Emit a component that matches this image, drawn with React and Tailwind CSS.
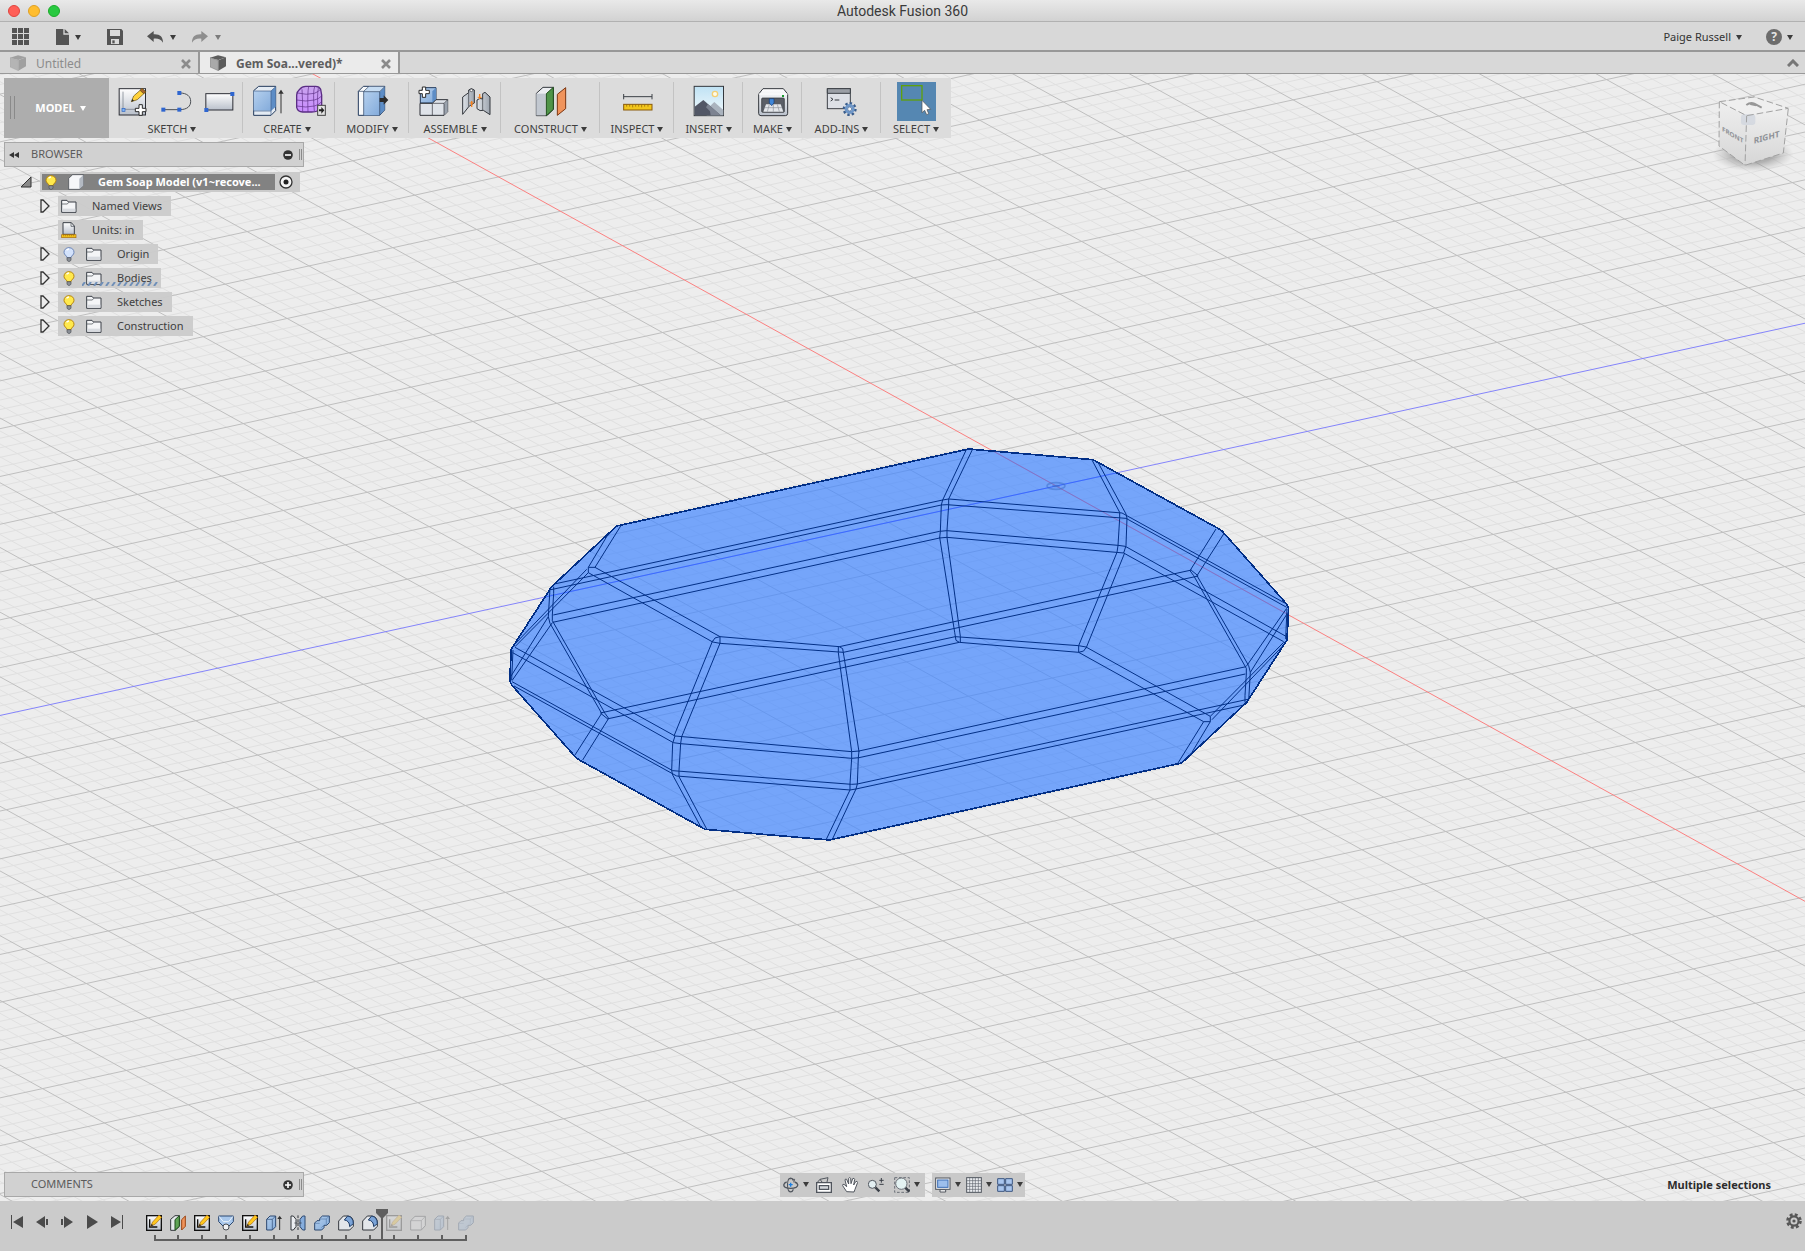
import React from "react";

/* ---------- viewport geometry ---------- */

const ORIGIN = { x: 1056, y: 412 };
const SLOPE_A = -0.2173;
const SLOPE_B = 0.5545;
const REACH = 2600;

const gridPath = (slope, step, from, to, keep) => {
  let d = "";
  for (let k = from; k <= to; k++) {
    if (!keep(k)) continue;
    const y = ORIGIN.y - slope * ORIGIN.x + k * step;
    d += `M0 ${y.toFixed(2)}L${REACH} ${(y + slope * REACH).toFixed(2)}`;
  }
  return d;
};

const isMajor = (k) => k % 5 === 0 && k !== 0;
const isMinor = (k) => k % 5 !== 0;

const minorGrid =
  gridPath(SLOPE_A, 9.56, -70, 160, isMinor) + gridPath(SLOPE_B, 12.94, -110, 110, isMinor);
const majorGrid =
  gridPath(SLOPE_A, 9.56, -70, 160, isMajor) + gridPath(SLOPE_B, 12.94, -110, 110, isMajor);

const GEM_OUTLINE =
  "M380 288L185 470L64 657L59 752L66 766L258 983L272 992L645 1198L1018 1230L2075 999L2270 817L2391 630L2396 535L2389 521L2197 304L2184 295L1809 89L1436 57Z";

// one half of the bevelled edges, the other half is the same turned by 180deg
const GEM_EDGES =
  "M75 652L555 918L1085 965L1107 963L2268 710M68 668L550 938L572 941L1085 985L1107 983L2266 732" +
  "M66 755L548 1022L1085 1063L1102 1062L2273 808M72 768L560 1038L1080 1080L1098 1077L2263 825" +
  "M555 918L548 940L545 1022L548 1035L632 1190M575 920L572 940L567 1022L567 1040L650 1197" +
  "M1085 965L1085 985L1080 1062L1080 1080L1008 1230M1107 963L1105 983L1102 1062L1098 1077L1027 1228" +
  "M668 632L552 918M690 640L575 920M315 412L690 620L1048 650L2105 420M295 428L668 636L690 640L1060 667L2125 438" +
  "M690 620L690 640M690 620L675 624L668 634M1045 650L1045 668L1085 965M1048 650L1058 656L1062 680L1107 965" +
  "M378 290L350 320L295 412L315 412L392 288M295 412L295 428L75 650M290 418L72 645" +
  "M191 470L191 490L187 555L187 572L345 850L356 865L278 990M180 475L175 560L180 580L335 850L255 975M332 850L352 866" +
  "M175 560L62 740M187 578L66 752M69 660L65 750";

const Gem = () => (
  <g transform="translate(490 356) scale(0.33333)" strokeLinejoin="round">
    <path d={GEM_OUTLINE} fill="#4286ff" fillOpacity="0.7" />
    <clipPath id="gem">
      <path d={GEM_OUTLINE} />
    </clipPath>
    <g clipPath="url(#gem)" fill="none" strokeWidth="3">
      <path d="M-300 602L2500 -6" stroke="#2b55ff" strokeOpacity="0.6" />
      <path d="M900 -275L2700 723" stroke="#a04a9a" strokeOpacity="0.35" />
    </g>
    <ellipse cx="1698" cy="168" rx="27" ry="10" fill="none" stroke="#3a6cc8" strokeOpacity="0.5" strokeWidth="5" />
    <ellipse cx="1698" cy="168" rx="12" ry="4" fill="#3a6cc8" fillOpacity="0.6" />
    <g fill="none" stroke="#022f86" strokeWidth="3" shapeRendering="crispEdges">
      <path d={GEM_EDGES} />
      <path d={GEM_EDGES} transform="translate(2456 1287) rotate(180)" />
      <path d={GEM_OUTLINE} strokeWidth="5" />
    </g>
  </g>
);

const Scene = () => (
  <svg className="absolute inset-0 h-full w-full" aria-hidden="true">
    <g fill="none" strokeWidth="1">
      <path d={minorGrid} stroke="#e0e0e0" />
      <path d={majorGrid} stroke="#bfbfbf" />
      <path d={gridPath(SLOPE_A, 9.56, 0, 0, () => true)} stroke="#8484fb" />
      <path d={gridPath(SLOPE_B, 12.94, 0, 0, () => true)} stroke="#fb8080" />
    </g>
    <Gem />
  </svg>
);

const ViewCube = () => (
  <svg className="absolute right-2 top-[16px] h-[84px] w-[84px]" viewBox="340 270 252 252" aria-label="View cube">
    <defs>
      <radialGradient id="cubeShadow">
        <stop offset="0.5" stopColor="#888" stopOpacity="0.6" />
        <stop offset="1" stopColor="#aaa" stopOpacity="0" />
      </radialGradient>
      <linearGradient id="cubeFace" x1="0" y1="0" x2="0" y2="1">
        <stop offset="0" stopColor="#efefef" />
        <stop offset="1" stopColor="#d6d6d6" />
      </linearGradient>
    </defs>
    <ellipse cx="460" cy="463" rx="122" ry="52" fill="url(#cubeShadow)" />
    <path d="M359 305L464 291L566 325L441 347Z" fill="#efefef" />
    <path d="M359 305L441 347L436 496L358 438Z" fill="url(#cubeFace)" />
    <path d="M441 347L566 325L551 459L436 496Z" fill="url(#cubeFace)" />
    <rect x="424" y="343" width="43" height="32" rx="9" fill="#cdd3dd" fillOpacity="0.7" />
    <path
      d="M359 305L464 291L566 325L441 347ZM441 347L436 496M359 305L358 438L436 496L551 459L566 325"
      fill="none"
      stroke="#a2a2a2"
      strokeWidth="3"
      strokeDasharray="20 9"
    />
    <path d="M440 315Q452 306 464 311L486 323M452 312L470 316" fill="none" stroke="#979797" strokeWidth="6" />
    <g fill="#8f9297" fontFamily="Noto Sans, sans-serif" fontWeight="700">
      <text fontSize="19" transform="translate(367 393) skewY(30)">FRONT</text>
      <text fontSize="25" transform="translate(462 431) skewY(-15)">RIGHT</text>
    </g>
  </svg>
);

/* ---------- shared bits ---------- */

const Caret = ({ className = "text-[#3c3c3c]" }) => (
  <svg className={`h-[5px] w-[6px] shrink-0 ${className}`} viewBox="0 0 6 5" aria-hidden="true">
    <path d="M0 0H6L3 5Z" fill="currentColor" />
  </svg>
);

const Icon = ({ box, className = "h-8 w-8", children }) => (
  <svg className={`shrink-0 ${className}`} viewBox={box} fill="none" aria-hidden="true">
    {children}
  </svg>
);

const Defs = () => (
  <svg className="absolute h-0 w-0" aria-hidden="true">
    <defs>
      <linearGradient id="paper" x1="0" y1="0" x2="0" y2="1">
        <stop offset="0" stopColor="#ffffff" />
        <stop offset="1" stopColor="#b9c0cb" />
      </linearGradient>
      <linearGradient id="blue" x1="0" y1="0" x2="1" y2="1">
        <stop offset="0" stopColor="#b5d0ee" />
        <stop offset="1" stopColor="#83abdb" />
      </linearGradient>
      <linearGradient id="sky" x1="0" y1="0" x2="0" y2="1">
        <stop offset="0" stopColor="#bfe2f4" />
        <stop offset="1" stopColor="#f3fafd" />
      </linearGradient>
      <linearGradient id="purple" x1="0" y1="0" x2="0" y2="1">
        <stop offset="0" stopColor="#c9a3ee" />
        <stop offset="1" stopColor="#c98dff" />
      </linearGradient>
      <linearGradient id="steel" x1="0" y1="0" x2="1" y2="0">
        <stop offset="0" stopColor="#dfe3e8" />
        <stop offset="1" stopColor="#9ca4ae" />
      </linearGradient>
    </defs>
  </svg>
);

/* ---------- ribbon icons ---------- */

const SketchIcon = () => (
  <Icon box="355 255 96 96">
    <rect x="358.500" y="266" width="79" height="79" fill="url(#paper)" stroke="#2d2f36" strokeWidth="3" />
    <path d="M370 275V328H412" stroke="#6b7280" strokeWidth="2" />
    <rect x="367" y="325" width="9" height="9" fill="#7fb4f5" stroke="#2b62c0" strokeWidth="2" />
    <path d="M395 305L402 288L427 266L438 276L413 299Z" fill="#ffd23c" stroke="#5f4a10" strokeWidth="2" />
    <path d="M421 271L427 265L438 275L432 281Z" fill="#a9672f" stroke="#5f4a10" strokeWidth="2" />
    <path d="M395 305L398 297L403 302Z" fill="#222" />
    <path d="M418 314H428V325H439V335H428V346H418V335H407V325H418Z" fill="#fff" stroke="#2b2b2b" strokeWidth="3" />
  </Icon>
);

const SplineIcon = () => (
  <Icon box="482 255 96 96">
    <path d="M489 329H537C562 329 571 318 571 304C571 289 560 279 538 279" stroke="#4b4f55" strokeWidth="3" />
    <rect x="483" y="323" width="12" height="12" fill="#2f66d0" />
    <rect x="531" y="323" width="12" height="12" fill="#2f66d0" />
    <rect x="531" y="273" width="12" height="12" fill="#2f66d0" />
  </Icon>
);

const RectIcon = () => (
  <Icon box="611 255 96 96">
    <rect x="616.500" y="281" width="81" height="49" fill="url(#paper)" stroke="#2d2f36" strokeWidth="3" />
    <rect x="612" y="324" width="12" height="12" fill="#2f66d0" />
    <rect x="690" y="276" width="12" height="12" fill="#2f66d0" />
  </Icon>
);

const ExtrudeIcon = () => (
  <Icon box="755 255 96 96">
    <path d="M760 272L775 259H826L826 332L812 346H760Z" fill="#e4ebf3" stroke="#233a5c" strokeWidth="3" />
    <path d="M760 273H812V332H760Z" fill="url(#blue)" />
    <path d="M812 273L826 260V320L812 333Z" fill="#5d8dc6" />
    <path d="M760 273H812L826 260M812 273V346M760 333H812" stroke="#3c5c86" strokeWidth="2" />
    <path d="M842 340V272" stroke="#333" strokeWidth="3" />
    <path d="M834 281L842 269L850 281Z" fill="#333" />
  </Icon>
);

const FormIcon = () => (
  <Icon box="885 255 96 96">
    <path
      d="M890 285Q890 276 899 268Q906 259 917 259H947Q958 259 962 268L965 285V318Q965 330 952 333Q946 336 935 336H908Q893 335 890 322Z"
      fill="url(#purple)"
      stroke="#5a2d84"
      strokeWidth="4"
    />
    <path
      d="M890 300Q918 306 943 300Q955 298 965 288M890 318Q918 324 943 318Q957 315 965 305M893 279Q920 286 943 280Q957 275 962 267M906 268Q908 300 908 335M926 260Q922 275 924 336M944 260Q938 275 943 334M955 264Q951 285 954 330"
      stroke="#5a2d84"
      strokeWidth="2"
    />
    <rect x="953" y="316" width="23" height="30" fill="#e2e2e2" stroke="#444" strokeWidth="3" />
    <path d="M957 328H964V321L973 331L964 341V334H957Z" fill="#222" />
  </Icon>
);

const ModifyIcon = () => (
  <Icon box="1068 255 96 96">
    <path d="M1072 274L1087 259H1151V330L1136 346H1072Z" fill="#f6f8fa" stroke="#233a5c" strokeWidth="3" />
    <path d="M1088 275H1136V346H1088Z" fill="url(#blue)" />
    <path d="M1136 275L1151 260V330L1136 345Z" fill="#5d8dc6" />
    <path d="M1088 275L1103 260H1151L1136 275Z" fill="#c6dcf2" />
    <path d="M1072 274H1088L1103 260M1088 274V346M1088 275H1136L1151 260M1136 275V346" stroke="#233a5c" strokeWidth="2" />
    <path d="M1136 294H1148V286L1162 300L1148 314V306H1136Z" fill="#2c2c2c" />
  </Icon>
);

const ComponentIcon = () => (
  <Icon box="1253 255 96 96">
    <path d="M1260 274L1272 263H1307V300L1296 309H1260Z" fill="url(#blue)" stroke="#233a5c" strokeWidth="3" />
    <path d="M1296 274L1307 263V300L1296 310Z" fill="#5d8dc6" />
    <path d="M1259 310H1296L1307 299H1342V335L1331 346H1259Z" fill="#dfe3e9" stroke="#2d2f36" strokeWidth="3" />
    <path d="M1331 311L1342 300V335L1331 346Z" fill="#9aa2ad" />
    <path d="M1296 310V346M1296 310H1331L1342 299M1331 310V346" stroke="#2d2f36" strokeWidth="2" />
    <path d="M1266 261H1276V271H1287V281H1276V292H1266V281H1256V271H1266Z" fill="#fff" stroke="#2b2b2b" strokeWidth="3" />
  </Icon>
);

const JointIcon = () => (
  <Icon box="1385 255 96 96">
    <path d="M1390 291L1408 278V270Q1416 262 1425 270V309L1410 318L1390 343Z" fill="url(#steel)" stroke="#33373d" strokeWidth="3" />
    <path d="M1408 278V318" stroke="#33373d" strokeWidth="2" />
    <circle cx="1416" cy="271" r="4" fill="#fff" stroke="#33373d" strokeWidth="2" />
    <path d="M1433 300Q1442 292 1450 297V281L1457 277L1472 291V344L1452 331Q1442 335 1433 326Z" fill="url(#steel)" stroke="#33373d" strokeWidth="3" />
    <path d="M1450 297V330" stroke="#33373d" strokeWidth="2" />
    <path d="M1417 303V321M1441 282V298" stroke="#f58220" strokeWidth="4" />
    <path d="M1411 309H1423M1435 292H1447" stroke="#f58220" strokeWidth="3" />
  </Icon>
);

const ConstructIcon = () => (
  <Icon box="225 45 96 96">
    <path d="M229 70L249 52H280V118L261 137H229Z" fill="#eceef1" stroke="#33373d" strokeWidth="3" />
    <path d="M229 71H257V136H229Z" fill="#c2c8d0" />
    <path d="M259 71L280 52V118L259 137Z" fill="#4f9448" stroke="#1f4d1c" strokeWidth="3" />
    <path d="M292 73L317 53V116L292 136Z" fill="#f0945c" stroke="#7c3510" strokeWidth="3" />
  </Icon>
);

const InspectIcon = () => (
  <Icon box="482 45 96 96">
    <path d="M487 80H572M487 72V88M572 72V88" stroke="#3c4046" strokeWidth="3" />
    <rect x="487" y="103" width="85" height="17" fill="#f2c61c" stroke="#8a5a0b" strokeWidth="3" />
    <path d="M496 104V110M505 104V110M514 104V112M523 104V110M532 104V110M541 104V112M550 104V110M560 104V110" stroke="#8a5a0b" strokeWidth="2" />
  </Icon>
);

const InsertIcon = () => (
  <Icon box="699 45 96 96">
    <rect x="702.500" y="49" width="88" height="88" fill="url(#sky)" stroke="#33373d" strokeWidth="3" />
    <path d="M740 118L763 96L790 120V136H740Z" fill="#aab3be" />
    <path d="M704 110L730 90L782 136H704Z" fill="#525766" />
    <path d="M730 90L744 102L738 112L750 124L752 136H782Z" fill="#7d8391" />
    <circle cx="765" cy="72" r="8" fill="#fffbe6" stroke="#f3cf74" strokeWidth="4" />
  </Icon>
);

const MakeIcon = () => (
  <Icon box="891 45 96 96">
    <path d="M896 72L909 56H970L983 72V130Q983 137 976 137H903Q896 137 896 130Z" fill="url(#paper)" stroke="#33373d" strokeWidth="3" />
    <path d="M896 72H983" stroke="#fff" strokeWidth="3" />
    <rect x="905" y="84" width="68" height="43" rx="3" fill="#5a5e66" stroke="#2b2d31" strokeWidth="2" />
    <path d="M918 103H962L970 125H910Z" fill="#e3e6ea" />
    <path d="M914 113H966M928 103L922 125M952 103L958 125M940 103V125" stroke="#8c9199" strokeWidth="2" />
    <path d="M928 86H942V99L935 107L928 99Z" fill="#3f86d8" stroke="#163d74" strokeWidth="2" />
    <rect x="966" y="75" width="6" height="6" fill="#189a2c" />
  </Icon>
);

const AddinsIcon = () => (
  <Icon box="1098 45 96 96">
    <rect x="1102" y="56" width="69" height="60" fill="#dde0e6" stroke="#3c4046" strokeWidth="3" />
    <path d="M1102 56H1171V70H1102Z" fill="#9b9fa6" stroke="#3c4046" strokeWidth="3" />
    <path d="M1112 83L1119 88L1112 93M1124 90H1138" stroke="#33373d" strokeWidth="3" />
    <circle cx="1169" cy="117" r="17" stroke="#3a5d8c" strokeWidth="8" strokeDasharray="7 6" />
    <circle cx="1169" cy="117" r="11" fill="#dbe7f5" stroke="#6f97c8" strokeWidth="8" />
    <circle cx="1169" cy="117" r="6" fill="#f3f7fb" stroke="#3a5d8c" strokeWidth="2" />
  </Icon>
);

const SelectIcon = () => (
  <Icon box="1310 38 117 117" className="h-[39px] w-[39px] bg-[#5587b2]">
    <rect x="1324" y="49" width="61" height="43" stroke="#5fa00c" strokeWidth="4" />
    <path d="M1385 93V130L1393 123L1399 136L1405 133L1400 121L1411 120Z" fill="#fff" stroke="#4a4a4a" strokeWidth="2" />
  </Icon>
);

const ribbon = [
  { label: "SKETCH", width: "w-[134px]", pad: "pr-2", icons: [SketchIcon, SplineIcon, RectIcon] },
  { label: "CREATE", width: "w-[92px]", pad: "pr-1", icons: [ExtrudeIcon, FormIcon] },
  { label: "MODIFY", width: "w-[74px]", icons: [ModifyIcon] },
  { label: "ASSEMBLE", width: "w-[92px]", icons: [ComponentIcon, JointIcon] },
  { label: "CONSTRUCT", width: "w-[99px]", icons: [ConstructIcon] },
  { label: "INSPECT", width: "w-[74px]", icons: [InspectIcon] },
  { label: "INSERT", width: "w-[69px]", icons: [InsertIcon] },
  { label: "MAKE", width: "w-[59px]", icons: [MakeIcon] },
  { label: "ADD-INS", width: "w-[79px]", icons: [AddinsIcon] },
  { label: "SELECT", width: "w-[70px]", icons: [SelectIcon] },
];

const Ribbon = () => (
  <div className="flex h-[60px] w-max bg-[#dcdcdc]">
    <button className="relative flex w-[105px] items-center justify-center gap-[5px] bg-[#adadad] pl-2 pt-px text-[11px] font-bold text-white">
      <span className="absolute left-[6px] top-[18px] h-[23px] w-[5px] border-x border-[#8a8a8a]" />
      MODEL
      <Caret className="text-white" />
    </button>
    {ribbon.map(({ label, width, pad = "", icons }, i) => (
      <div key={label} className={`relative flex flex-col pt-[3px] ${width}`}>
        <div className="mb-px flex h-10 items-center justify-center gap-[11px] pl-px">
          {icons.map((Glyph, n) => (
            <button key={n} aria-label={`${label} ${n + 1}`}>
              <Glyph />
            </button>
          ))}
        </div>
        <button
          className={`flex h-[14px] items-center justify-center gap-[3px] text-[11px] leading-[14px] text-[#3f3f3f] ${pad}`}
        >
          {label}
          <Caret />
        </button>
        {i < ribbon.length - 1 && <span className="absolute right-0 top-1 h-[51px] w-px bg-[#c3c3c3]" />}
      </div>
    ))}
  </div>
);

/* ---------- title, quick access, tabs ---------- */

const TitleBar = () => (
  <header className="relative flex h-[22px] items-center justify-center border-b border-[#b1b1b1] bg-gradient-to-b from-[#e9e9e9] to-[#d2d2d2]">
    <div className="absolute left-2 flex gap-2">
      <button aria-label="Close" className="h-3 w-3 rounded-full border border-[#e0443e] bg-[#ff5f57]" />
      <button aria-label="Minimize" className="h-3 w-3 rounded-full border border-[#dfa023] bg-[#ffbd2e]" />
      <button aria-label="Zoom" className="h-3 w-3 rounded-full border border-[#1aab29] bg-[#28c940]" />
    </div>
    <h1 className="font-[Roboto,sans-serif] text-[14px] leading-4 text-[#3a3a3a]">Autodesk Fusion 360</h1>
  </header>
);

const QuickBar = () => (
  <div className="flex h-[30px] items-center border-b-2 border-[#989898] bg-[#d8d8d8] px-3 pt-[2px] text-[#545454]">
    <button aria-label="Data panel">
      <Icon box="0 0 54 54" className="h-[18px] w-[18px]">
        <path
          d="M0 0H15V15H0ZM18 0H33V15H18ZM36 0H51V15H36ZM0 18H15V33H0ZM18 18H33V33H18ZM36 18H51V33H36ZM0 36H15V51H0ZM18 36H33V51H18ZM36 36H51V51H36Z"
          fill="currentColor"
        />
      </Icon>
    </button>
    <button aria-label="File" className="ml-[26px] flex items-center gap-[6px]">
      <Icon box="168 87 39 48" className="h-4 w-[13px]">
        <path d="M168 87H190V104H207V135H168ZM194 87L207 100H194Z" fill="currentColor" />
      </Icon>
      <Caret />
    </button>
    <button aria-label="Save" className="ml-[26px]">
      <Icon box="321 87 48 48" className="h-4 w-4">
        <path d="M321 87H364L369 92V135H321Z" fill="currentColor" />
        <path d="M330 90H360V108H330ZM333 117H357V132H333Z" fill="#dadada" />
        <path d="M337 121H344V130H337Z" fill="currentColor" />
      </Icon>
    </button>
    <button aria-label="Undo" className="ml-6 flex items-center gap-[7px]">
      <Icon box="441 87 48 48" className="h-4 w-4">
        <path d="M441 109L461 93V103C480 102 489 110 489 128C483 118 475 115 461 116V126Z" fill="currentColor" />
      </Icon>
      <Caret />
    </button>
    <button aria-label="Redo" className="ml-4 flex items-center gap-[7px] text-[#8e8e8e]">
      <Icon box="575 87 48 48" className="h-4 w-4">
        <path d="M623 109L603 93V103C584 102 575 110 575 128C581 118 589 115 603 116V126Z" fill="currentColor" />
      </Icon>
      <Caret className="text-[#7c7c7c]" />
    </button>
    <button className="ml-auto flex items-center gap-[5px] text-[11px] text-[#333]">
      Paige Russell
      <Caret />
    </button>
    <button aria-label="Help" className="ml-6 flex items-center gap-[5px]">
      <span className="flex h-4 w-4 items-center justify-center rounded-full bg-[#6c6c6c] text-[12px] font-bold leading-4 text-[#e4e4e4]">
        ?
      </span>
      <Caret />
    </button>
  </div>
);

const TabCube = ({ light, dark }) => (
  <Icon box="30 162 48 48" className="mb-[2px] h-4 w-4">
    <path d="M30 170L54 163L78 169L55 177Z" fill={dark} />
    <path d="M55 178L78 169V196L55 209Z" fill={dark} />
    <path d="M30 170L55 178V209L30 198Z" fill={light} stroke={dark} strokeWidth="1" />
  </Icon>
);

const CloseMark = () => (
  <svg className="h-[10px] w-[10px]" viewBox="0 0 10 10" aria-hidden="true">
    <path d="M1 1L9 9M9 1L1 9" stroke="#8b8b8b" strokeWidth="2.600" />
  </svg>
);

const Tabs = () => (
  <nav className="flex h-[22px] border-b border-[#999] bg-[#d8d8d8] text-[12px] text-[#8c8c8c]">
    <div className="flex w-[200px] items-center border-r-2 border-[#989898] pl-[10px] pr-[7px] pt-[2px]">
      <TabCube light="#b4b4b4" dark="#a0a0a0" />
      <button className="pl-[10px] leading-5">Untitled</button>
      <button aria-label="Close Untitled" className="ml-auto">
        <CloseMark />
      </button>
    </div>
    <div className="flex w-[200px] items-center border-r-2 border-[#989898] bg-[#ebebeb] pl-[10px] pr-[7px] pt-[2px]">
      <TabCube light="#a9a9a9" dark="#5c5c5c" />
      <button className="pl-[10px] font-bold leading-5 text-[#5e5e5e]">Gem Soa...vered)*</button>
      <button aria-label="Close Gem Soap Model" className="ml-auto">
        <CloseMark />
      </button>
    </div>
    <button aria-label="Collapse toolbar" className="ml-auto pr-[6px]">
      <svg className="h-2 w-3" viewBox="0 0 12 8" fill="none" aria-hidden="true">
        <path d="M1 7L6 2L11 7" stroke="#777" strokeWidth="3" />
      </svg>
    </button>
  </nav>
);

/* ---------- browser tree ---------- */

const Bulb = ({ on = true }) => (
  <Icon box="188 335 36 45" className="h-[15px] w-3">
    <path
      d="M206 337C196 337 191 344 191 351C191 359 199 360 200 367H212C213 360 221 359 221 351C221 344 216 337 206 337Z"
      fill={on ? "#ffe94d" : "#d3e2fb"}
      stroke={on ? "#b8860b" : "#6c86b8"}
      strokeWidth="3"
    />
    <path d="M199 345Q201 341 206 341" stroke="#fff" strokeWidth="4" />
    <path d="M200 367H212V375L206 379L200 375Z" fill="#8a8f96" stroke="#4b4f55" strokeWidth="2" />
  </Icon>
);

const Folder = () => (
  <Icon box="257 337 48 42" className="h-[14px] w-4">
    <path d="M259 341H275L279 346H302V377H259Z" fill="#f4f5f7" stroke="#3a3f47" strokeWidth="3" />
    <path d="M260 352H276L280 347" stroke="#3a3f47" strokeWidth="2" />
    <path d="M262 366H300V375H262Z" fill="#d8dbe0" />
  </Icon>
);

const UnitsDoc = () => (
  <Icon box="182 261 48 48" className="h-4 w-4">
    <path d="M188 263H213L222 273V298H188Z" fill="url(#paper)" stroke="#3a3f47" strokeWidth="3" />
    <path d="M212 263V274H222" stroke="#3a3f47" strokeWidth="2" />
    <rect x="184" y="299" width="43" height="9" fill="#f5c518" stroke="#a4690c" strokeWidth="2" />
    <path d="M190 300V304M196 300V304M202 300V304M208 300V304M214 300V304M220 300V304" stroke="#a4690c" strokeWidth="2" />
  </Icon>
);

const Twisty = () => (
  <svg className="h-[14px] w-[10px]" viewBox="0 0 10 14" aria-hidden="true">
    <path d="M1 1H3L9 7L3 13H1Z" fill="#ededed" stroke="#333" strokeWidth="1.300" />
  </svg>
);

const treeItems = [
  { name: "Named Views", folder: true },
  { name: "Units: in", units: true },
  { name: "Origin", folder: true, bulb: "off" },
  { name: "Bodies", folder: true, bulb: "on", squiggle: true },
  { name: "Sketches", folder: true, bulb: "on" },
  { name: "Construction", folder: true, bulb: "on" },
];

const TreeRow = ({ item }) => (
  <li className="flex h-5 items-center pl-9">
    <button aria-label={`Expand ${item.name}`} className="flex w-[18px]" disabled={item.units}>
      {!item.units && <Twisty />}
    </button>
    <div className="relative flex h-5 items-center bg-[#cbcbcb]/95 pl-[3px] pr-[9px]">
      {item.bulb && (
        <button aria-label={`Toggle ${item.name}`} className="mr-[9px] flex w-4 justify-center">
          <Bulb on={item.bulb === "on"} />
        </button>
      )}
      {item.units ? <UnitsDoc /> : <Folder />}
      <button className="pl-[15px] text-[11px] leading-5 text-[#404040]">{item.name}</button>
      {item.squiggle && (
        <svg className="absolute bottom-[2px] left-6 h-[4px] w-[78px]" aria-hidden="true">
          <path
            d="M0 4L3 0M6 4L9 0M12 4L15 0M18 4L21 0M24 4L27 0M30 4L33 0M36 4L39 0M42 4L45 0M48 4L51 0M54 4L57 0M60 4L63 0M66 4L69 0M72 4L75 0"
            stroke="#6f8fb8"
            strokeWidth="2"
          />
        </svg>
      )}
    </div>
  </li>
);

const PanelHeader = ({ title, open }) => (
  <div className="relative flex h-[25px] w-[300px] items-center border border-[#a8a8a8] bg-[#d1d1d1] text-[11px] text-[#5b5b5b]">
    <span className="flex w-[26px] pl-1">
      {open && (
        <svg className="h-[6px] w-[10px]" viewBox="0 0 10 6" aria-hidden="true">
          <path d="M5 0V6L0 3ZM10 0V6L5 3Z" fill="#333" />
        </svg>
      )}
    </span>
    <h2>{title}</h2>
    <button aria-label={`Toggle ${title}`} className="ml-auto mr-[10px]">
      <svg className="h-[10px] w-[10px]" viewBox="0 0 10 10" aria-hidden="true">
        <circle cx="5" cy="5" r="4.800" fill="#333" />
        <path d={open ? "M2 5H8" : "M2 5H8M5 2V8"} stroke="#fff" strokeWidth="1.600" />
      </svg>
    </button>
    <span className="absolute right-[1px] h-[11px] w-[3px] border-x border-[#8b8b8b]" />
  </div>
);

const Browser = () => (
  <section className="w-[300px]">
    <PanelHeader title="BROWSER" open />
    <div className="mt-[5px] flex h-5 items-center pl-4 pr-1">
      <button aria-label="Collapse model" className="w-5">
        <svg className="h-3 w-3" viewBox="0 0 12 12" aria-hidden="true">
          <path d="M11 1V11H1Z" fill="#8a8a8a" stroke="#333" />
        </svg>
      </button>
      <div className="flex h-5 flex-1 items-center bg-[#cbcbcb] px-[2px]">
        <div className="flex h-4 w-[233px] items-center bg-[#828282] pl-[3px]">
          <Bulb />
          <Icon box="204 117 48 48" className="ml-[11px] h-4 w-4">
            <path d="M206 130L218 119H250V152L238 163H206Z" fill="#f6f7f9" stroke="#3a3f47" strokeWidth="2" />
            <path d="M238 131L250 120V152L238 163Z" fill="#b3b9c2" />
          </Icon>
          <button className="pl-[14px] text-[11px] font-bold leading-4 text-white">Gem Soap Model (v1~recove...</button>
        </div>
        <label className="ml-1 flex">
          <input type="radio" defaultChecked aria-label="Activate component" className="peer sr-only" />
          <svg className="h-[14px] w-[14px]" viewBox="0 0 14 14" aria-hidden="true">
            <circle cx="7" cy="7" r="6" fill="#f5f5f5" stroke="#333" strokeWidth="1.300" />
            <circle cx="7" cy="7" r="2.500" fill="#222" />
          </svg>
        </label>
      </div>
    </div>
    <ul className="mt-1 flex flex-col gap-1">
      {treeItems.map((item) => (
        <TreeRow key={item.name} item={item} />
      ))}
    </ul>
  </section>
);

/* ---------- navigation bar ---------- */

const NavIcon = ({ x, children }) => (
  <Icon box={`${x} 51 48 48`} className="h-4 w-4">
    {children}
  </Icon>
);

const NavBar = () => (
  <div className="flex gap-[7px]">
    <div className="flex h-6 items-center bg-[#c9c9c9] pl-[3px] pr-[5px]">
      <button aria-label="Orbit" className="mr-[7px] flex items-center gap-1">
        <NavIcon x={69}>
          <path d="M84 62C87 52 97 52 100 62M84 88C87 98 97 98 100 88" stroke="#50555d" strokeWidth="4" />
          <path d="M84 62C82 70 82 80 84 88M92 55V58" stroke="#50555d" strokeWidth="3" />
          <path d="M80 66C70 69 69 78 76 82C84 86 100 86 108 82C116 77 115 70 104 66" stroke="#50555d" strokeWidth="4" />
          <path d="M96 58L104 58L101 67" stroke="#50555d" strokeWidth="3" />
          <path d="M86 74H98M92 68V80" stroke="#1c7fe0" strokeWidth="4" />
        </NavIcon>
        <Caret />
      </button>
      <button aria-label="Look at" className="mr-[10px]">
        <NavIcon x={168}>
          <path d="M170 68H214V97H170Z" fill="#fff" stroke="#50555d" strokeWidth="4" />
          <path d="M178 77H206V88H178Z" fill="#d5d8dc" stroke="#50555d" strokeWidth="4" />
          <path d="M173 66L180 58L204 53L201 66M180 58L186 66" stroke="#50555d" strokeWidth="3" />
        </NavIcon>
      </button>
      <button aria-label="Pan" className="mr-[10px]">
        <NavIcon x={246}>
          <path
            d="M260 95L248 77Q247 72 252 73L260 80L255 60Q256 55 260 58L266 72V55Q269 50 272 55L273 71L278 56Q283 53 284 58L281 75L287 65Q292 62 293 67L285 88L282 96Z"
            fill="#fff"
            stroke="#50555d"
            strokeWidth="3"
          />
        </NavIcon>
      </button>
      <button aria-label="Zoom" className="mr-[10px]">
        <NavIcon x={324}>
          <path d="M346 82L358 94" stroke="#3a3f47" strokeWidth="7" />
          <circle cx="337" cy="73" r="12" fill="#e3eff2" stroke="#50555d" strokeWidth="3" />
          <path d="M358 61H371M364 54V68M358 73H371" stroke="#3a3f47" strokeWidth="3" />
        </NavIcon>
      </button>
      <button aria-label="Fit" className="flex items-center gap-1">
        <NavIcon x={402}>
          <path d="M404 53H448V97H404Z" stroke="#6b7078" strokeWidth="3" strokeDasharray="8 5" />
          <path d="M436 83L448 95" stroke="#3a3f47" strokeWidth="8" />
          <circle cx="424" cy="71" r="17" fill="#e3f2f2" stroke="#6b7078" strokeWidth="3" />
        </NavIcon>
        <Caret />
      </button>
    </div>
    <div className="flex h-6 items-center gap-[5px] bg-[#c9c9c9] pl-[3px] pr-[2px]">
      <button aria-label="Display settings" className="flex items-center gap-1">
        <NavIcon x={525}>
          <rect x="527" y="54" width="43" height="34" fill="#f1f2f4" stroke="#50555d" strokeWidth="3" />
          <rect x="533" y="60" width="31" height="22" fill="#9dbfec" stroke="#3e6fb4" strokeWidth="3" />
          <path d="M540 89H557V96H540Z" fill="#fff" stroke="#50555d" strokeWidth="3" />
        </NavIcon>
        <Caret />
      </button>
      <button aria-label="Grid and snaps" className="flex items-center gap-1">
        <NavIcon x={618}>
          <rect x="620" y="53" width="44" height="44" fill="#eef0f3" stroke="#50555d" strokeWidth="3" />
          <path
            d="M629 53V97M638 53V97M646 53V97M655 53V97M620 62H664M620 71H664M620 79H664M620 88H664"
            stroke="#5d636c"
            strokeWidth="2"
          />
        </NavIcon>
        <Caret />
      </button>
      <button aria-label="Viewports" className="flex items-center gap-1">
        <NavIcon x={710}>
          <path
            d="M712 56H732V73H712ZM736 56H756V73H736ZM712 77H732V94H712ZM736 77H756V94H736Z"
            fill="#a9c6ee"
            stroke="#3c5680"
            strokeWidth="3"
          />
        </NavIcon>
        <Caret />
      </button>
    </div>
  </div>
);

/* ---------- timeline ---------- */

const TlSketch = () => (
  <Icon box="0 0 48 48" className="h-4 w-4">
    <rect x="2" y="2" width="44" height="44" fill="url(#paper)" stroke="#111" strokeWidth="4" />
    <path d="M11 13V36H34" stroke="#111" strokeWidth="4" />
    <path d="M14 34L20 21L39 0L47 7L28 27Z" fill="#ffc81e" stroke="#a5650c" strokeWidth="2" />
    <path d="M14 34L17 27L22 31Z" fill="#222" />
  </Icon>
);

const TlPlane = () => (
  <Icon box="0 0 48 48" className="h-4 w-4">
    <path d="M2 13L15 2H28V34L15 46H2Z" fill="#e6e9ed" stroke="#33373d" strokeWidth="3" />
    <path d="M15 14L28 2V34L15 46Z" fill="#5ea355" stroke="#1f4d1c" strokeWidth="3" />
    <path d="M35 14L46 3V34L35 45Z" fill="#f0945c" stroke="#9a4414" strokeWidth="3" />
  </Icon>
);

const TlLoft = () => (
  <Icon box="0 0 48 48" className="h-4 w-4">
    <path d="M2 3H46V20L32 34H16L2 20Z" fill="#a9c8ec" stroke="#2c4870" strokeWidth="3" />
    <path d="M3 4L16 20H32L45 4" stroke="#eaf2fb" strokeWidth="3" />
    <circle cx="24" cy="36" r="9" fill="#f0f2f5" stroke="#4b4f55" strokeWidth="3" />
  </Icon>
);

const TlExtrude = () => (
  <Icon box="0 0 48 48" className="h-4 w-4">
    <path d="M2 13L12 3H29V35L19 45H2Z" fill="url(#blue)" stroke="#2c4870" strokeWidth="3" />
    <path d="M2 13H19L29 3M19 13V45" stroke="#2c4870" strokeWidth="2" />
    <path d="M41 45V6" stroke="#333" strokeWidth="3" />
    <path d="M34 12L41 2L48 12Z" fill="#333" />
  </Icon>
);

const TlMirror = () => (
  <Icon box="0 0 48 48" className="h-4 w-4">
    <path d="M3 3L10 3L18 13V35L10 45H3Z" fill="#eceef1" stroke="#33373d" strokeWidth="3" />
    <path d="M45 3L38 3L30 13V35L38 45H45Z" fill="#86addd" stroke="#2c4870" strokeWidth="3" />
    <path d="M24 1V47" stroke="#33373d" strokeWidth="3" strokeDasharray="8 4" />
    <path d="M13 24H35" stroke="#33373d" strokeWidth="2" />
  </Icon>
);

const TlCombine = () => (
  <Icon box="0 0 48 48" className="h-4 w-4">
    <path d="M17 11L25 3H46V23L38 31H30V38L23 45H2V24L9 17H17Z" fill="url(#blue)" stroke="#2c4870" strokeWidth="3" />
    <path d="M18 12H37L45 4M37 12V30M3 25H17M29 31L22 38" stroke="#5579a8" strokeWidth="2" />
  </Icon>
);

const TlFillet = () => (
  <Icon box="0 0 48 48" className="h-4 w-4">
    <path d="M2 18L16 3H30Q46 5 46 24V34L35 45H2Z" fill="#e3e6ea" stroke="#33373d" strokeWidth="3" />
    <path d="M19 15L29 3Q46 6 46 26L35 35Q35 17 19 15Z" fill="#7ba4d8" stroke="#1f3c66" strokeWidth="3" />
  </Icon>
);

const TlBox = () => (
  <Icon box="0 0 48 48" className="h-4 w-4">
    <path d="M2 17L15 4H46V32L34 45H2Z" fill="#eceef1" stroke="#33373d" strokeWidth="3" />
    <path d="M2 17H34L46 4M34 17V45" stroke="#33373d" strokeWidth="2" />
  </Icon>
);

const features = [
  { name: "Sketch1", Glyph: TlSketch },
  { name: "Plane1", Glyph: TlPlane },
  { name: "Sketch2", Glyph: TlSketch },
  { name: "Loft1", Glyph: TlLoft },
  { name: "Sketch3", Glyph: TlSketch },
  { name: "Extrude1", Glyph: TlExtrude },
  { name: "Mirror1", Glyph: TlMirror },
  { name: "Combine1", Glyph: TlCombine },
  { name: "Fillet1", Glyph: TlFillet },
  { name: "Fillet2", Glyph: TlFillet },
  { name: "Sketch4", Glyph: TlSketch, rolled: true },
  { name: "Body1", Glyph: TlBox, rolled: true },
  { name: "Extrude2", Glyph: TlExtrude, rolled: true },
  { name: "Combine2", Glyph: TlCombine, rolled: true },
];

const playback = [
  { name: "Go to start", d: "M0 0H1V14H0ZM12 1V13L2 7Z" },
  { name: "Step back", d: "M9 1V13L0 7ZM10 4H12V10H10Z" },
  { name: "Step forward", d: "M3 1V13L12 7ZM0 4H2V10H0Z" },
  { name: "Play", d: "M1 0V14L12 7Z" },
  { name: "Go to end", d: "M11 0H12V14H11ZM0 1V13L10 7Z" },
];

const Timeline = () => (
  <footer className="flex h-[50px] items-start bg-[#cbcbcb]">
    <div className="flex gap-[13px] pl-[11px] pt-[14px]">
      {playback.map(({ name, d }) => (
        <button key={name} aria-label={name} className="h-[14px]">
          <svg className="h-[14px] w-3" viewBox="0 0 12 14" aria-hidden="true">
            <path d={d} fill="#4b4b4b" />
          </svg>
        </button>
      ))}
    </div>
    <div className="relative ml-[23px] pt-[14px]">
      <div className="flex gap-2">
        {features.map(({ name, Glyph, rolled }) => (
          <button key={name} aria-label={name} className={rolled ? "opacity-25" : ""}>
            <Glyph />
          </button>
        ))}
      </div>
      <svg className="mt-1 h-[6px] w-[328px]" viewBox="0 0 328 6" aria-hidden="true">
        <path
          d="M9 0V5M32 0V5M56 0V5M80 0V5M104 0V5M128 0V5M152 0V5M176 0V5M200 0V5M224 0V5M248 0V5M272 0V5M296 0V5M320 0V5M8 5H321"
          stroke="#606060"
          strokeWidth="2"
          fill="none"
        />
      </svg>
      <svg className="absolute left-[230px] top-2 h-[31px] w-3" viewBox="0 0 12 31" aria-hidden="true">
        <path d="M0 0H12V4L7 9V31H5V9L0 4Z" fill="#5f5f5f" />
      </svg>
    </div>
    <button aria-label="Timeline settings" className="ml-auto pr-[3px] pt-3">
      <svg className="h-4 w-4" viewBox="0 0 16 16" fill="none" stroke="#575757" aria-hidden="true">
        <circle cx="8" cy="8" r="6.500" strokeWidth="2.600" strokeDasharray="2.900 2.205" />
        <circle cx="8" cy="8" r="4.600" strokeWidth="2.200" />
        <circle cx="8" cy="8" r="1.600" fill="#575757" stroke="none" />
      </svg>
    </button>
  </footer>
);

const App = () => {
  return (
    <div className="flex h-screen flex-col overflow-hidden bg-[#ededed] font-['Noto_Sans','Open_Sans',sans-serif]">
      <Defs />
      <TitleBar />
      <QuickBar />
      <Tabs />
      <main className="relative flex flex-1 flex-col overflow-hidden">
        <Scene />
        <ViewCube />
        <div className="relative flex flex-1 flex-col items-start gap-1 pl-1 pt-1">
          <Ribbon />
          <Browser />
        </div>
        <div className="relative grid grid-cols-[1fr_auto_1fr] items-center px-1 pb-1">
          <PanelHeader title="COMMENTS" />
          <NavBar />
          <p className="pr-[30px] pt-px text-right text-[11px] font-bold text-[#2c2c2c]">Multiple selections</p>
        </div>
      </main>
      <Timeline />
    </div>
  );
};

export default App;
